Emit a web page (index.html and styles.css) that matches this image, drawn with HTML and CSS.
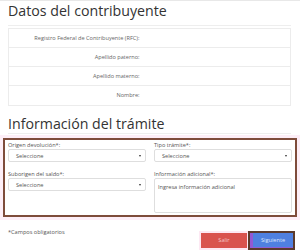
FILE: index.html
```html
<!DOCTYPE html>
<html lang="es">
<head>
<meta charset="utf-8">
<link rel="stylesheet" href="styles.css">
</head>
<body>
<div class="page">
  <h2 class="title">Datos del contribuyente</h2>
  <div class="datos">
    <div class="row"><div class="lbl">Registro Federal de Contribuyente (RFC):</div><div class="val"></div></div>
    <div class="row"><div class="lbl">Apellido paterno:</div><div class="val"></div></div>
    <div class="row"><div class="lbl">Apellido materno:</div><div class="val"></div></div>
    <div class="row"><div class="lbl">Nombre:</div><div class="val"></div></div>
  </div>
  <h2 class="title title2">Información del trámite</h2>
  <div class="tramite">
    <div class="col">
      <label class="flbl">Origen devolución*:</label>
      <div class="select"><span>Seleccione</span><i class="caret"></i></div>
      <label class="flbl second">Suborigen del saldo*:</label>
      <div class="select"><span>Seleccione</span><i class="caret"></i></div>
    </div>
    <div class="col">
      <label class="flbl">Tipo trámite*:</label>
      <div class="select"><span>Seleccione</span><i class="caret"></i></div>
      <label class="flbl second">Información adicional*:</label>
      <div class="textarea">Ingresa información adicional</div>
    </div>
  </div>
  <div class="footer">
    <div class="req">*Campos obligatorios</div>
    <div class="buttons">
      <div class="btn salir">Salir</div>
      <div class="btn sig"><span>Siguiente</span></div>
    </div>
  </div>
</div>
</body>
</html>
```
FILE: styles.css
```css
html, body {
  margin: 0;
  padding: 0;
  background: #fff;
}
body {
  width: 300px;
  height: 251px;
  overflow: hidden;
  font-family: "Open Sans", "Liberation Sans", sans-serif;
  color: #333;
  border-top: 1px solid #e8e8e8;
  box-sizing: border-box;
}
.page {
  display: flex;
  flex-direction: column;
}
.title {
  margin: 0 9px 0 8px;
  font-size: 14.2px;
  font-weight: 400;
  line-height: 20px;
  padding-bottom: 4px;
  border-bottom: 1px solid #eeeeee;
  color: #333;
}
.title2 {
  margin-top: 8px;
  line-height: 19px;
  padding-bottom: 0;
}
.datos {
  margin: 2px 9px 0 8px;
  border: 1px solid #ececec;
}
.row {
  display: grid;
  grid-template-columns: 1fr 1fr;
  height: 18px;
  border-bottom: 1px solid #ececec;
}
.row:last-child {
  border-bottom: none;
  height: 19px;
}
.lbl {
  font-size: 5.6px;
  line-height: 18px;
  text-align: right;
  padding-right: 10px;
  color: #666;
}
.tramite {
  margin: 4px 3px 0 3px;
  border: 2px solid #7e4c3b;
  box-shadow: 0 0 0 3px #fdeef7;
  padding: 1px 3px 2px 3px;
  display: grid;
  grid-template-columns: 1fr 1fr;
  column-gap: 8px;
}
.col {
  display: flex;
  flex-direction: column;
}
.flbl {
  font-size: 5.6px;
  line-height: 8px;
  color: #555;
}
.flbl.second {
  margin-top: 8px;
}
.select {
  height: 13px;
  border: 1px solid #dedede;
  border-radius: 2px;
  box-sizing: border-box;
  display: flex;
  align-items: center;
  justify-content: space-between;
  padding: 0 4px 0 7px;
  font-size: 5.6px;
  color: #555;
}
.caret {
  width: 0;
  height: 0;
  border-left: 1.5px solid transparent;
  border-right: 1.5px solid transparent;
  border-top: 2px solid #333;
}
.textarea {
  height: 35px;
  border: 1px solid #dedede;
  border-radius: 2px;
  box-sizing: border-box;
  padding: 4px 4px 0 3px;
  font-size: 5.6px;
  line-height: 8px;
  color: #555;
}
.footer {
  display: flex;
  justify-content: space-between;
  align-items: flex-start;
  margin-top: 11px;
  padding: 0 5px 0 8px;
}
.req {
  font-size: 5.6px;
  line-height: 8px;
  color: #555;
}
.buttons {
  display: flex;
  align-items: center;
  margin-top: 3px;
  gap: 1px;
}
.btn {
  font-size: 5.6px;
  color: #fff;
  text-align: center;
  box-sizing: border-box;
}
.salir {
  width: 46px;
  height: 15px;
  line-height: 15px;
  background: #d9534f;
  color: #f3c6c6;
  box-shadow: 0 0 0 2px #fde8f3;
}
.sig {
  width: 47px;
  height: 19px;
  border: 2px solid #5b3a2c;
  background: #4f80e0;
  display: flex;
}
.sig span {
  flex: 1;
  border-left: 3px solid #9358d4;
  border-bottom: 1px solid #8c60d6;
  line-height: 14px;
  color: #dde6fb;
}
```
